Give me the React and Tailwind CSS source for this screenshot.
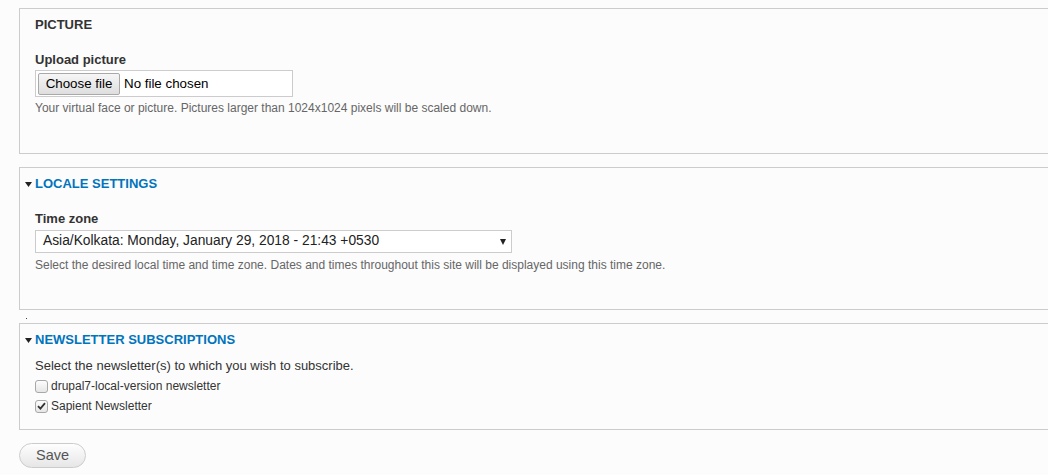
import React from 'react';

const font = { fontFamily: '"Liberation Sans", Arial, sans-serif' };

// Small black disclosure triangle shown before collapsible legends
const Caret = () => (
  <svg width="7" height="5" viewBox="0 0 7 5" className="mr-[3px] ml-[5px]">
    <path d="M0 0h7L3.5 5z" fill="#222" />
  </svg>
);

const Checkbox = ({ checked }) => (
  <span className="w-[13px] h-[13px] rounded-[3px] border border-[#a8a8a8] bg-gradient-to-b from-[#fdfdfd] to-[#e6e6e6] flex items-center justify-center">
    {checked && (
      <svg width="9" height="8" viewBox="0 0 9 8">
        <path d="M1 4.2l2.4 2.4L8 1.2" fill="none" stroke="#333" strokeWidth="1.8" />
      </svg>
    )}
  </span>
);

const App = () => {
  return (
    <div className="bg-[#fcfcfc] h-[475px] overflow-hidden pl-[19px] pt-[8px] text-[#333]" style={font}>
      {/* Picture */}
      <div className="border border-[#ccc] w-[1060px] h-[146px] pl-[15px] pt-[8px]">
        <div className="text-[13px] font-bold leading-4">PICTURE</div>
        <div className="mt-[19px] text-[13px] font-bold leading-4">Upload picture</div>
        <div className="mt-[2px] w-[258px] h-[27px] border border-[#ccc] bg-white flex items-center pl-[2px]">
          <button className="h-[22px] w-[82px] border border-[#a9a9a9] rounded-[2px] bg-gradient-to-b from-[#f6f6f6] to-[#dedede] text-[13.33px] text-black leading-none">
            Choose file
          </button>
          <span className="ml-[4px] text-[13.33px] text-black">No file chosen</span>
        </div>
        <div className="mt-[4px] text-[12px] leading-[15px] text-[#666]">
          Your virtual face or picture. Pictures larger than 1024x1024 pixels will be scaled down.
        </div>
      </div>

      {/* Locale settings */}
      <div className="mt-[13px] border border-[#ccc] w-[1060px] h-[143px] pt-[8px]">
        <div className="flex items-center h-4">
          <Caret />
          <span className="text-[13px] font-bold text-[#0074bd] leading-4">LOCALE SETTINGS</span>
        </div>
        <div className="pl-[15px]">
          <div className="mt-[19px] text-[13px] font-bold leading-4">Time zone</div>
          <div className="mt-[3px] w-[477px] h-[23px] border border-[#ccc] bg-white flex items-center justify-between pl-[7px] pr-[5px]">
            <span className="text-[13.8px] text-[#222]">Asia/Kolkata: Monday, January 29, 2018 - 21:43 +0530</span>
            <svg width="6" height="6" viewBox="0 0 6 6">
              <path d="M0 0h6L3 6z" fill="#222" />
            </svg>
          </div>
          <div className="mt-[5px] text-[12px] leading-[15px] text-[#666]">
            Select the desired local time and time zone. Dates and times throughout this site will be displayed using this time zone.
          </div>
        </div>
      </div>

      <div className="h-[13px] pt-[8px] pl-[7px]">
        <div className="w-px h-px bg-[#444]" />
      </div>

      {/* Newsletter subscriptions */}
      <div className="border border-[#ccc] w-[1060px] h-[107px] pt-[8px]">
        <div className="flex items-center h-4">
          <Caret />
          <span className="text-[13px] font-bold text-[#0074bd] leading-4">NEWSLETTER SUBSCRIPTIONS</span>
        </div>
        <div className="pl-[15px]">
          <div className="mt-[10px] text-[13px] leading-4">Select the newsletter(s) to which you wish to subscribe.</div>
          <div className="mt-[2px] h-[20px] flex items-center gap-[3px]">
            <Checkbox />
            <span className="text-[12px]">drupal7-local-version newsletter</span>
          </div>
          <div className="h-[20px] flex items-center gap-[3px]">
            <Checkbox checked />
            <span className="text-[12px]">Sapient Newsletter</span>
          </div>
        </div>
      </div>

      <button className="mt-[13px] w-[67px] h-[25px] rounded-full border border-[#ccc] bg-gradient-to-b from-[#fefefe] to-[#e6e6e6] text-[14.5px] text-[#555] leading-none">
        Save
      </button>
    </div>
  );
};

export default App;
